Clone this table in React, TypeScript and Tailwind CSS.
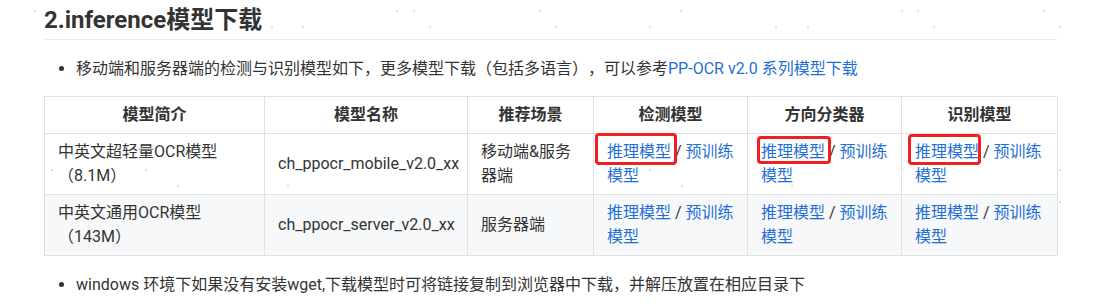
const dots: [number, number][] = [
  [34, 10], [271, 26], [302, 26], [396, 10], [413, 10], [429, 26], [539, 10],
  [555, 26], [649, 26], [680, 10], [775, 26], [807, 26], [901, 10], [917, 10],
  [933, 26], [1043, 10], [1059, 26],
  [51, 169], [145, 169], [177, 185], [287, 185], [649, 169], [681, 185],
  [791, 185], [901, 169], [1059, 169],
  [51, 200], [145, 200], [271, 200], [429, 200], [523, 200], [649, 201],
  [775, 201], [933, 201], [1027, 201], [1059, 201],
];

const marks = [
  "left-[595px] top-[133px] w-[82px] h-[32px]",
  "left-[757px] top-[136px] w-[74px] h-[28px]",
  "left-[908px] top-[134px] w-[73px] h-[31px]",
];

function Links() {
  return (
    <span className="text-[#1f6fd6]">
      <span className="whitespace-nowrap">
        推理模型 <span className="text-[#333]">/</span> 预训练
      </span>
      <br />
      模型
    </span>
  );
}

const th = "border border-[#dfe2e5] px-[13px] py-[6px] text-center font-bold";
const td = "border border-[#dfe2e5] px-[13px] py-[6px] align-middle";

export default function App() {
  return (
    <div
      className="relative h-[307px] w-[1093px] overflow-hidden bg-white text-[16px] leading-[24px] text-[#333] [text-spacing-trim:space-all]"
      style={{ fontFamily: 'Roboto, "Noto Sans CJK SC", sans-serif' }}
    >
      {dots.map(([x, y], i) => (
        <span
          key={i}
          className="absolute h-[2px] w-[2px] rounded-full bg-[#d4d4d4]"
          style={{ left: x, top: y }}
        />
      ))}

      <div className="relative ml-[44px] w-[1013px]">
        <h2 className="border-b border-[#eaecef] pt-[5px] pb-[4px] text-[24px] leading-[30px] font-bold text-[#333]">
          2.inference模型下载
        </h2>

        <ul className="mt-[17px] list-disc pl-[32px] marker:text-[#333]">
          <li>
            移动端和服务器端的检测与识别模型如下，更多模型下载（包括多语言），可以参考
            <span className="text-[#1f6fd6]">PP-OCR v2.0 系列模型下载</span>
          </li>
        </ul>

        <table className="mt-[15px] w-[1013px] table-fixed border-collapse">
          <colgroup>
            <col className="w-[220px]" />
            <col className="w-[203px]" />
            <col className="w-[126px]" />
            <col className="w-[154px]" />
            <col className="w-[154px]" />
            <col className="w-[156px]" />
          </colgroup>
          <thead>
            <tr>
              <th className={th}>模型简介</th>
              <th className={th}>模型名称</th>
              <th className={th}>推荐场景</th>
              <th className={th}>检测模型</th>
              <th className={th}>方向分类器</th>
              <th className={th}>识别模型</th>
            </tr>
          </thead>
          <tbody>
            <tr>
              <td className={td}>
                <span className="whitespace-nowrap">中英文超轻量OCR模型</span>
                <br />
                （8.1M）
              </td>
              <td className={td}>ch_ppocr_mobile_v2.0_xx</td>
              <td className={td}>
                <span className="whitespace-nowrap">移动端&amp;服务</span>
                <br />
                器端
              </td>
              <td className={td}><Links /></td>
              <td className={td}><Links /></td>
              <td className={td}><Links /></td>
            </tr>
            <tr className="bg-[#f6f8fa]">
              <td className={td}>
                中英文通用OCR模型
                <br />
                （143M）
              </td>
              <td className={td}>ch_ppocr_server_v2.0_xx</td>
              <td className={td}>服务器端</td>
              <td className={td}><Links /></td>
              <td className={td}><Links /></td>
              <td className={td}><Links /></td>
            </tr>
          </tbody>
        </table>

        <ul className="mt-[17px] list-disc pl-[32px]">
          <li>windows 环境下如果没有安装wget,下载模型时可将链接复制到浏览器中下载，并解压放置在相应目录下</li>
        </ul>
      </div>

      {marks.map((m, i) => (
        <span key={i} className={`absolute rounded-[4px] border-[3px] border-[#f02020] ${m}`} />
      ))}
    </div>
  );
}
